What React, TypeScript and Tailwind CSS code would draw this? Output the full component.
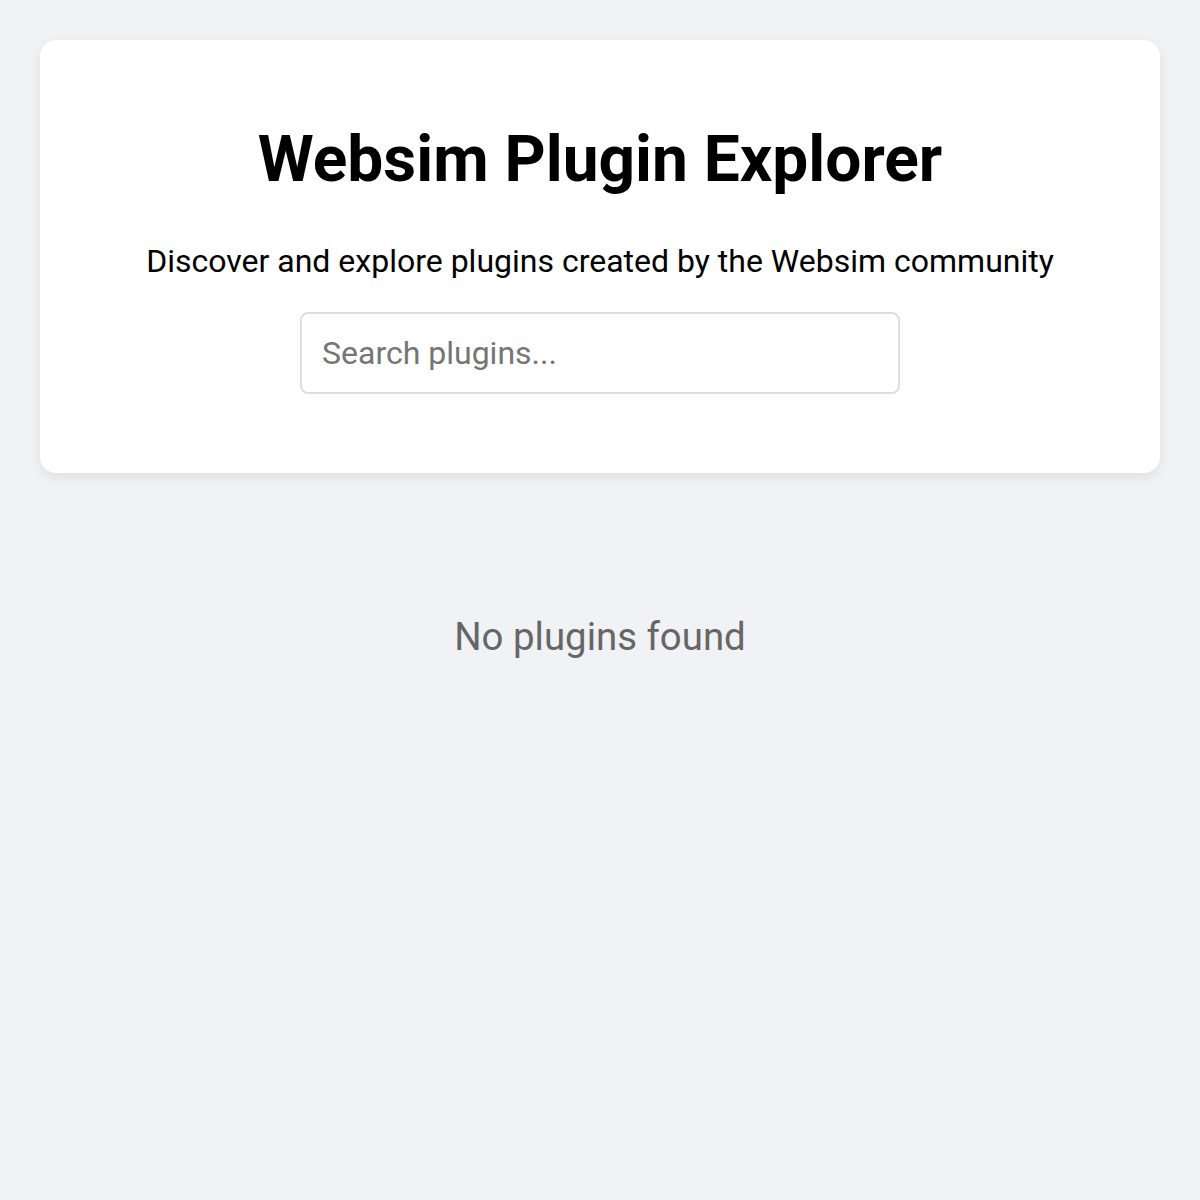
import React, { useState } from 'react';

const App: React.FC = () => {
  const [query, setQuery] = useState('');

  return (
    <div className="min-h-[1200px] w-full bg-[#f0f2f5] p-10 font-['Roboto',sans-serif] text-black">
      {/* Header card */}
      <header className="flex flex-col items-center rounded-2xl bg-white px-10 pt-[82px] pb-[79px] shadow-[0_4px_12px_rgba(0,0,0,0.08)]">
        <h1 className="text-[64px] font-bold leading-[1.2]">Websim Plugin Explorer</h1>
        <p className="mt-[43px] text-[32px] leading-[1.2]">
          Discover and explore plugins created by the Websim community
        </p>
        <input
          type="text"
          value={query}
          onChange={(e) => setQuery(e.target.value)}
          placeholder="Search plugins..."
          className="mt-[32px] h-[82px] w-[600px] rounded-lg border-2 border-[#dddddd] bg-white px-5 text-[32px] outline-none placeholder:text-[#757575]"
        />
      </header>

      {/* Results */}
      <div className="flex justify-center pt-[135px]">
        <p className="text-[38.4px] text-[#666666]">No plugins found</p>
      </div>
    </div>
  );
};

export default App;
